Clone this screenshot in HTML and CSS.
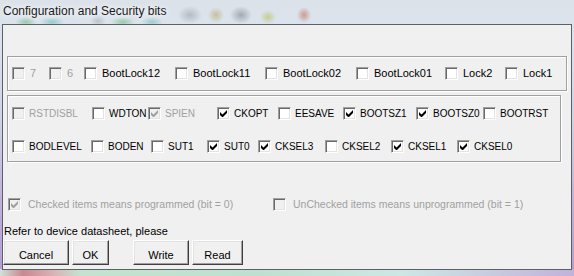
FILE: index.html
```html
<!DOCTYPE html>
<html lang="en">
<head>
    <meta charset="UTF-8">
    <meta name="viewport" content="width=device-width, initial-scale=1.0">
    <title>Configuration and Security bits</title>
    <link rel="stylesheet" href="styles.css">
</head>
<body>
    <div class="caption">Configuration and Security bits</div>

    <div class="dialog">
        <!-- Lock bits -->
        <div class="group lockbits">
            <div class="row">
                <label class="item disabled"><span class="cb"></span>7</label>
                <label class="item disabled"><span class="cb"></span>6</label>
                <label class="item"><span class="cb"></span>BootLock12</label>
                <label class="item"><span class="cb"></span>BootLock11</label>
                <label class="item"><span class="cb"></span>BootLock02</label>
                <label class="item"><span class="cb"></span>BootLock01</label>
                <label class="item"><span class="cb"></span>Lock2</label>
                <label class="item"><span class="cb"></span>Lock1</label>
            </div>
        </div>

        <!-- Fuse bits -->
        <div class="group fusebits">
            <div class="row row-high">
                <label class="item disabled"><span class="cb"></span>RSTDISBL</label>
                <label class="item"><span class="cb"></span>WDTON</label>
                <label class="item disabled"><span class="cb"><svg viewBox="0 0 7 7" width="7" height="7"><polygon points="0,2 2.5,4.5 7,0 7,3 2.5,7.5 0,5"/></svg></span>SPIEN</label>
                <label class="item"><span class="cb"><svg viewBox="0 0 7 7" width="7" height="7"><polygon points="0,2 2.5,4.5 7,0 7,3 2.5,7.5 0,5"/></svg></span>CKOPT</label>
                <label class="item"><span class="cb"></span>EESAVE</label>
                <label class="item"><span class="cb"><svg viewBox="0 0 7 7" width="7" height="7"><polygon points="0,2 2.5,4.5 7,0 7,3 2.5,7.5 0,5"/></svg></span>BOOTSZ1</label>
                <label class="item"><span class="cb"><svg viewBox="0 0 7 7" width="7" height="7"><polygon points="0,2 2.5,4.5 7,0 7,3 2.5,7.5 0,5"/></svg></span>BOOTSZ0</label>
                <label class="item"><span class="cb"></span>BOOTRST</label>
            </div>
            <div class="row row-low">
                <label class="item"><span class="cb"></span>BODLEVEL</label>
                <label class="item"><span class="cb"></span>BODEN</label>
                <label class="item"><span class="cb"></span>SUT1</label>
                <label class="item"><span class="cb"><svg viewBox="0 0 7 7" width="7" height="7"><polygon points="0,2 2.5,4.5 7,0 7,3 2.5,7.5 0,5"/></svg></span>SUT0</label>
                <label class="item"><span class="cb"><svg viewBox="0 0 7 7" width="7" height="7"><polygon points="0,2 2.5,4.5 7,0 7,3 2.5,7.5 0,5"/></svg></span>CKSEL3</label>
                <label class="item"><span class="cb"></span>CKSEL2</label>
                <label class="item"><span class="cb"><svg viewBox="0 0 7 7" width="7" height="7"><polygon points="0,2 2.5,4.5 7,0 7,3 2.5,7.5 0,5"/></svg></span>CKSEL1</label>
                <label class="item"><span class="cb"><svg viewBox="0 0 7 7" width="7" height="7"><polygon points="0,2 2.5,4.5 7,0 7,3 2.5,7.5 0,5"/></svg></span>CKSEL0</label>
            </div>
        </div>

        <!-- Legend -->
        <div class="legend">
            <label class="item disabled"><span class="cb"><svg viewBox="0 0 7 7" width="7" height="7"><polygon points="0,2 2.5,4.5 7,0 7,3 2.5,7.5 0,5"/></svg></span>Checked items means programmed (bit = 0)</label>
            <label class="item disabled"><span class="cb"></span>UnChecked items means unprogrammed (bit = 1)</label>
        </div>

        <div class="hint">Refer to device datasheet, please</div>

        <div class="buttons">
            <button class="btn btn-cancel">Cancel</button>
            <button class="btn btn-ok">OK</button>
            <button class="btn btn-write">Write</button>
            <button class="btn btn-read">Read</button>
        </div>
    </div>
</body>
</html>
```

FILE: styles.css
```css
body {
    margin: 0;
    width: 574px;
    height: 276px;
    overflow: hidden;
    font-family: "Liberation Sans", Arial, sans-serif;
    font-size: 11px;
    color: #000;
    background:
        linear-gradient(to right, #cfe2da 0, #c98890 4%, #d8b0b4 9%, #c4e2cf 14%, #bfe0d0 45%, #cde7e4 70%, #c2b2da 100%) left bottom / 100% 7px no-repeat,
        linear-gradient(to bottom, #dce2e9 0, #d9e3ee 40px, #cdd3e8 120px, #c2b0dc 200px, #b59cd2 276px);
}
.caption {
    height: 24px;
    line-height: 22px;
    padding-left: 3px;
    box-sizing: border-box;
    font-size: 12px;
    color: #1a1a1a;
    text-shadow: 0 0 5px #fff, 0 0 9px #fff;
    background:
        radial-gradient(ellipse 11px 5px at 26px 22px, rgba(70, 170, 90, 0.45), transparent),
        radial-gradient(ellipse 12px 5px at 52px 22px, rgba(60, 170, 170, 0.45), transparent),
        radial-gradient(ellipse 8px 6px at 98px 21px, rgba(120, 120, 120, 0.3), transparent),
        radial-gradient(ellipse 12px 5px at 123px 22px, rgba(70, 170, 90, 0.45), transparent),
        radial-gradient(ellipse 11px 5px at 152px 22px, rgba(60, 170, 170, 0.4), transparent),
        radial-gradient(ellipse 12px 9px at 190px 15px, rgba(110, 115, 115, 0.35), transparent),
        radial-gradient(ellipse 8px 8px at 216px 15px, rgba(170, 150, 60, 0.45), transparent),
        radial-gradient(ellipse 11px 9px at 241px 15px, rgba(80, 85, 85, 0.4), transparent),
        radial-gradient(ellipse 8px 7px at 268px 17px, rgba(170, 180, 40, 0.45), transparent),
        radial-gradient(ellipse 7px 8px at 304px 15px, rgba(190, 80, 60, 0.5), transparent);
}
.dialog {
    margin-left: 2px;
    width: 570px;
    height: 246px;
    box-sizing: border-box;
    border: 1px solid #5c6166;
    background-color: #f0f0f0;
}
.group {
    box-sizing: border-box;
    margin-left: 4px;
    border: 1px solid #a0a0a0;
    box-shadow: 1px 1px 0 #fff, inset 1px 1px 0 #fff;
}
.lockbits {
    margin-top: 31px;
    width: 560px;
    padding: 10px 0 10px 4px;
}
.fusebits {
    margin-top: 4px;
    width: 554px;
    padding: 11px 0 8px 4px;
    display: flex;
    flex-direction: column;
    gap: 20px;
    font-size: 10px;
}
.fusebits .item {
    gap: 4px;
}
.row {
    display: grid;
    align-items: center;
    height: 13px;
}
.lockbits .row {
    grid-template-columns: 37px 35px 91px 90px 91px 89px 60px auto;
}
.row-high {
    grid-template-columns: 80px 56px 69px 61px 65px 73px 67px auto;
}
.row-low {
    grid-template-columns: 79px 60px 56px 51px 67px 66px 66px auto;
}
.item {
    display: flex;
    align-items: center;
    gap: 5px;
    white-space: nowrap;
    line-height: 13px;
}
.item.disabled {
    color: #a0a0a0;
}
.cb {
    flex: none;
    width: 13px;
    height: 13px;
    box-sizing: border-box;
    padding: 2px;
    border: 1px solid;
    border-color: #a0a0a0 #fff #fff #a0a0a0;
    box-shadow: inset 1px 1px 0 #696969, inset -1px -1px 0 #e3e3e3;
    background-color: #fff;
}
.cb svg {
    display: block;
    fill: #000;
}
.disabled .cb {
    background-color: #f0f0f0;
}
.disabled .cb svg {
    fill: #a0a0a0;
}
.legend {
    display: grid;
    grid-template-columns: 265px auto;
    margin: 36px 0 0 5px;
    height: 13px;
    font-size: 10.5px;
}
.legend .item {
    gap: 7px;
}
.hint {
    margin: 14px 0 0 1px;
    line-height: 13px;
}
.buttons {
    display: flex;
    margin-top: 2px;
}
.btn {
    font: inherit;
    color: #000;
    height: 25px;
    box-sizing: border-box;
    margin: 0 3px 0 0;
    padding: 7px 0 2px;
    line-height: 13px;
    border: 1px solid;
    border-color: #fff #404040 #404040 #fff;
    box-shadow: inset -1px -1px 0 #a0a0a0, inset 1px 1px 0 #e3e3e3;
    background-color: #f0f0f0;
}
.btn-cancel {
    width: 66px;
}
.btn-ok {
    width: 37px;
    margin-right: 24px;
}
.btn-write {
    width: 56px;
}
.btn-read {
    width: 51px;
}
```
